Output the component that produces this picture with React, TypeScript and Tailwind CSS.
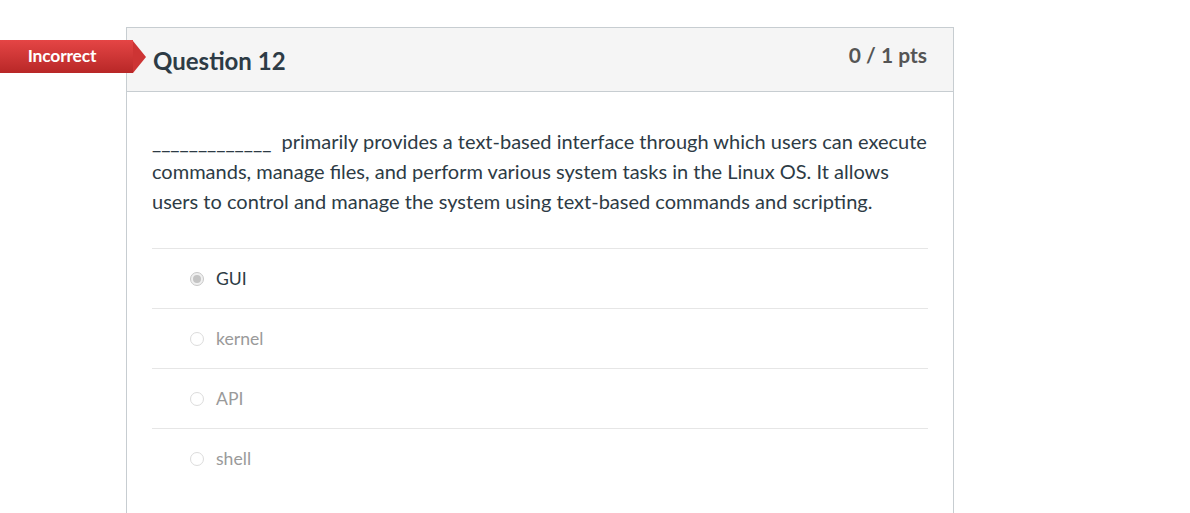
export default function App() {
  const answers = [
    { label: 'GUI', picked: true },
    { label: 'kernel', picked: false },
    { label: 'API', picked: false },
    { label: 'shell', picked: false },
  ];

  return (
    <div className="relative min-h-[513px] bg-white pt-[27px] font-['Lato','Liberation_Sans',sans-serif] text-[#2d3b45]">
      {/* result flag */}
      <div className="absolute left-0 top-[40px] z-10 flex h-[33px] items-center">
        <div className="flex h-full w-[133px] items-center justify-center bg-gradient-to-b from-[#e54545] to-[#b82727] pr-[9px] text-[17.5px] font-bold tracking-[-0.2px] text-white">
          Incorrect
        </div>
        <div className="h-0 w-0 border-y-[16.5px] border-l-[13px] border-y-transparent border-l-[#cd3434]" />
      </div>

      <div className="ml-[126px] w-[828px] border-x border-t border-[#c7cdd1]">
        <div className="flex h-[64px] items-start justify-between border-b border-[#c7cdd1] bg-[#f5f5f5] pl-[26px] pr-[26px]">
          <h2 className="mt-[17px] text-[24px] font-bold leading-[32px] text-[#2d3b45]">Question 12</h2>
          <div className="mt-[13px] text-[21px] font-bold leading-[28px] text-[#555]">0 / 1 pts</div>
        </div>

        <div className="px-[25px] pt-[34px]">
          <p className="text-[20px] leading-[30px]">
            _____________&nbsp; primarily provides a text-based interface through which users can execute
            commands, manage files, and perform various system tasks in the Linux OS. It allows users to
            control and manage the system using text-based commands and scripting.
          </p>

          <div className="mt-[32px]">
            {answers.map((a) => (
              <div key={a.label} className="flex h-[60px] items-center border-t border-[#e6e6e6] pl-[38px]">
                <span
                  className={
                    a.picked
                      ? 'flex h-[14px] w-[14px] items-center justify-center rounded-full border border-[#c8c8c8] bg-[#f0f0f0]'
                      : 'h-[14px] w-[14px] rounded-full border border-[#dcdcdc] bg-white'
                  }
                >
                  {a.picked && <span className="h-[8px] w-[8px] rounded-full bg-[#c4c4c4]" />}
                </span>
                <span
                  className={
                    a.picked
                      ? 'ml-[12px] pt-[1px] text-[17.6px] text-[#2d3b45]'
                      : 'ml-[12px] pt-[1px] text-[17.6px] text-[#9a9a9a]'
                  }
                >
                  {a.label}
                </span>
              </div>
            ))}
            <div className="h-[30px]" />
          </div>
        </div>
      </div>
    </div>
  );
}
